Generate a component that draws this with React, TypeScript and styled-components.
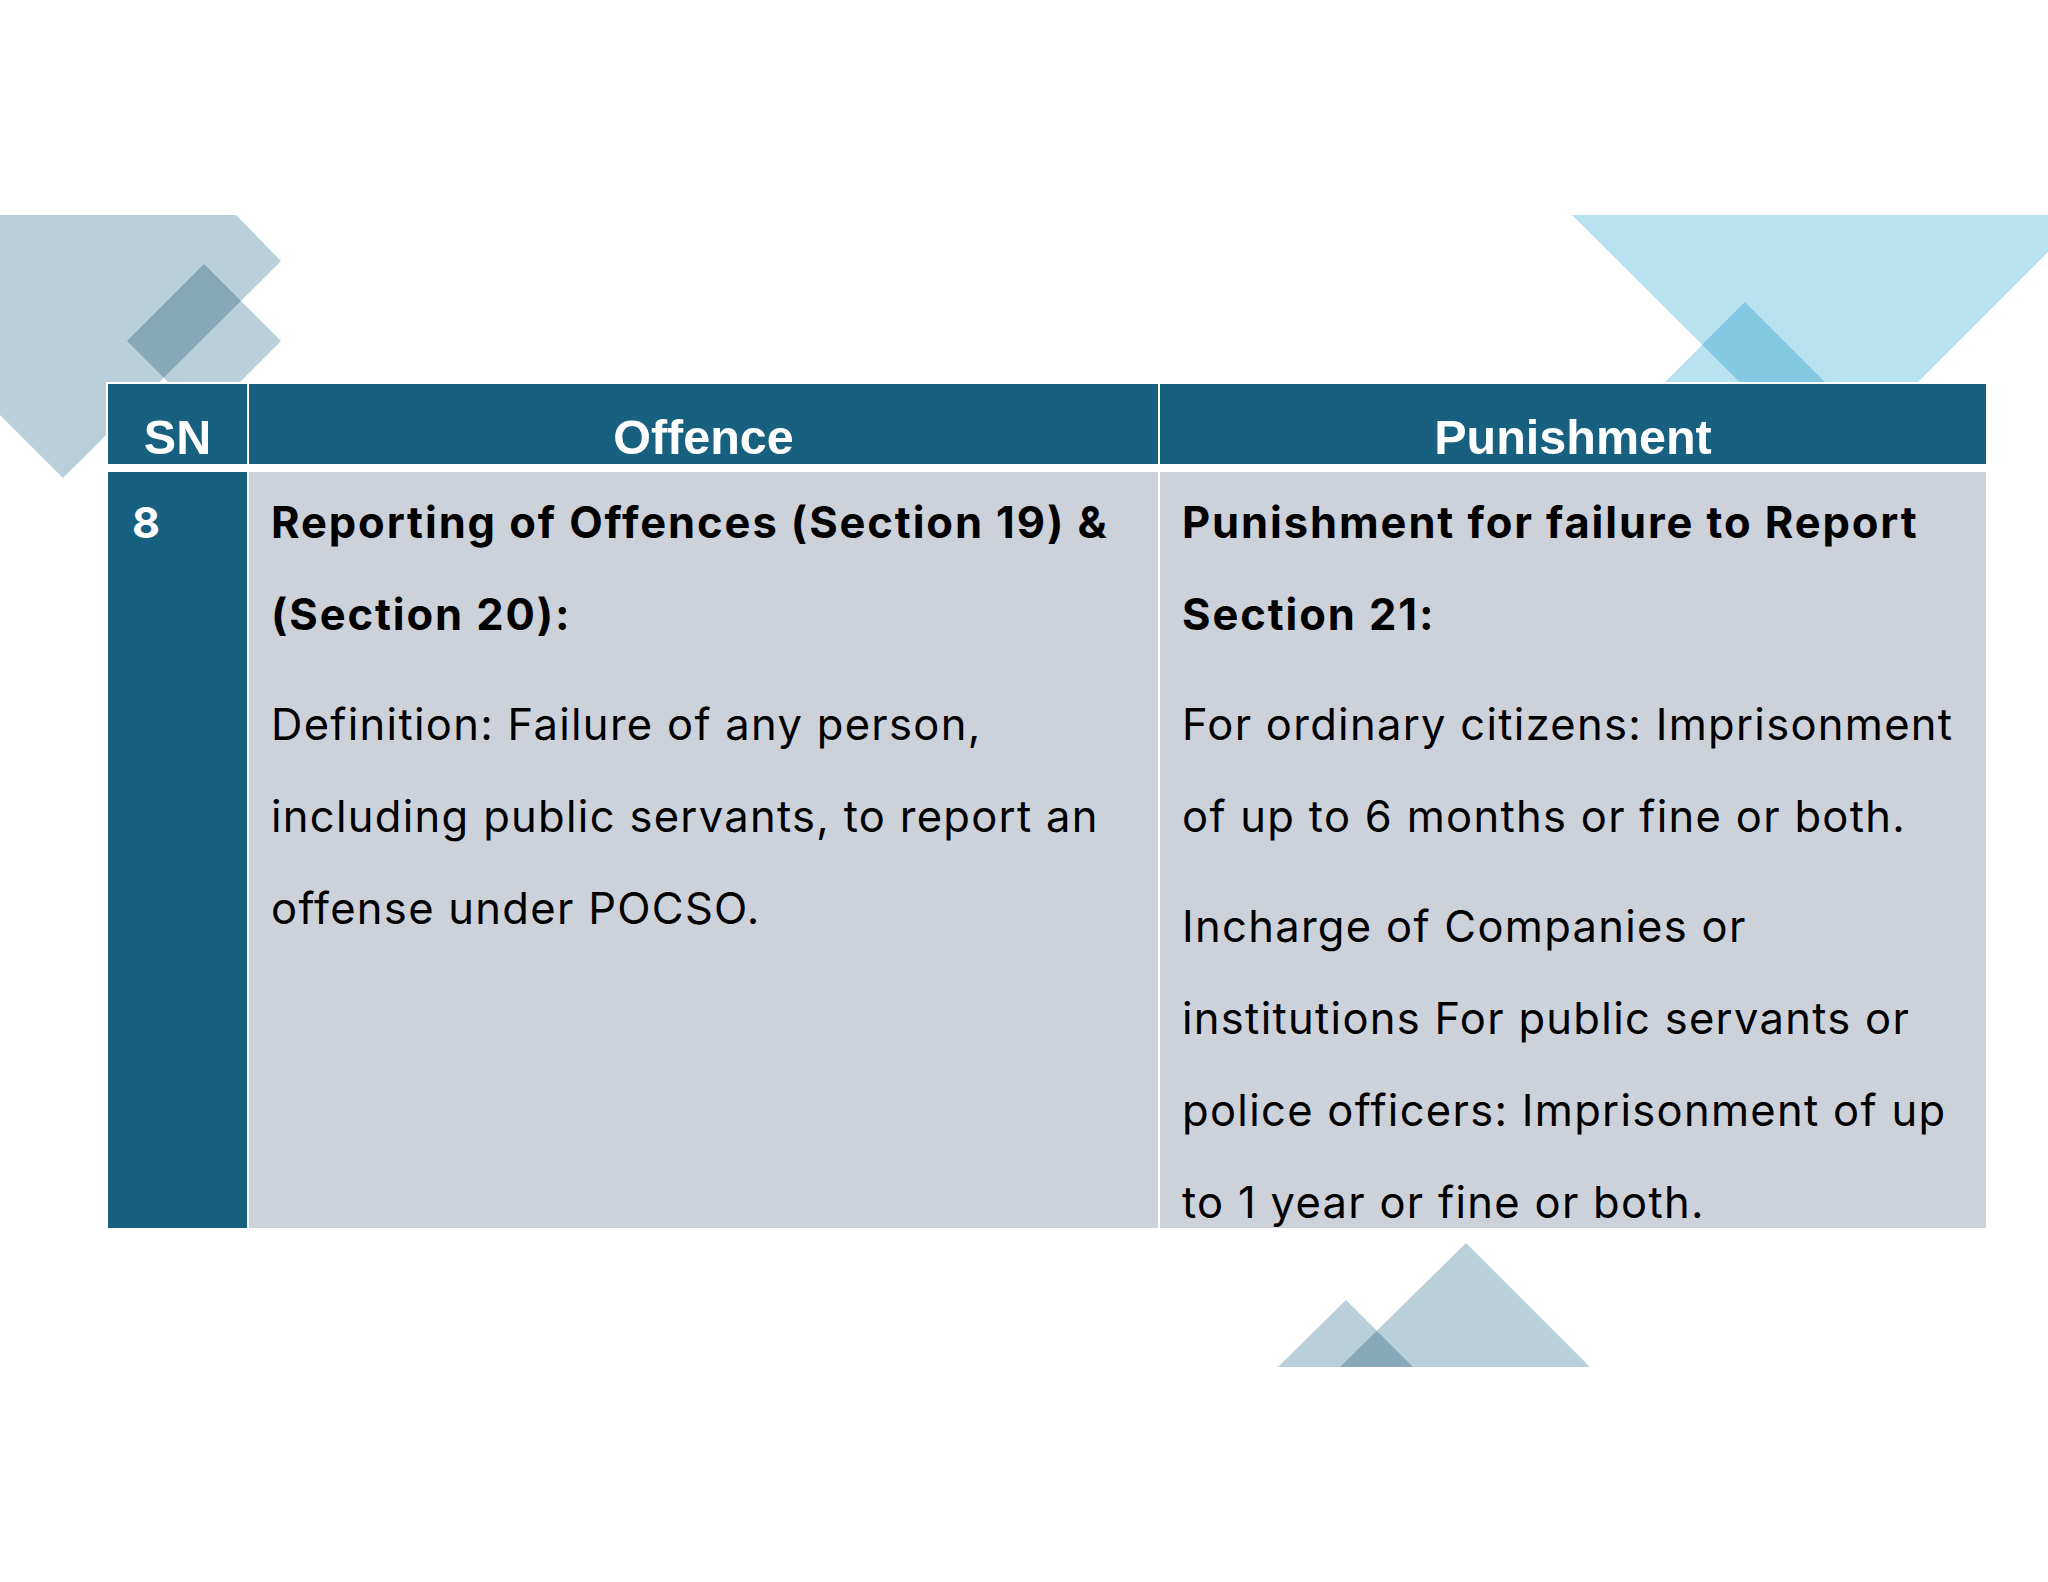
import React from 'react';
import styled, { createGlobalStyle } from 'styled-components';

const GlobalStyle = createGlobalStyle`
  html, body {
    margin: 0;
    padding: 0;
    background: #ffffff;
  }
  body {
    font-family: Inter, Roboto, "Liberation Sans", sans-serif;
  }
`;

const Slide = styled.div`
  position: relative;
  width: 2048px;
  height: 1582px;
  box-sizing: border-box;
  padding: 382px 0 0 106px;
  background: #ffffff;
  overflow: hidden;
`;

const Deco = styled.svg<{ $top: number; $left: number }>`
  position: absolute;
  top: ${(p) => p.$top}px;
  left: ${(p) => p.$left}px;
  overflow: hidden;
  polygon {
    mix-blend-mode: multiply;
  }
`;

const Table = styled.div`
  position: relative;
  z-index: 1;
  display: grid;
  grid-template-columns: 139px 909px 826px;
  grid-template-rows: 80px 756px;
  column-gap: 2px;
  row-gap: 8px;
  width: fit-content;
  padding: 2px;
  background: #ffffff;
`;

const HeadCell = styled.div`
  display: flex;
  align-items: flex-end;
  justify-content: center;
  padding-bottom: 3px;
  box-sizing: border-box;
  background: #186080;
  color: #ffffff;
  font-family: "Liberation Sans", Arial, sans-serif;
  font-weight: 700;
  font-size: 48.5px;
  line-height: 1;
`;

const SnCell = styled.div`
  background: #186080;
  color: #ffffff;
  padding: 4px 0 0 24px;
  font-weight: 700;
  font-size: 43px;
  line-height: 92px;
`;

const BodyCell = styled.div`
  background: #cdd2da;
  padding: 4px 0 0 22px;
  color: #000000;
  overflow: visible;
`;

const Para = styled.p<{ $bold?: boolean }>`
  margin: 0;
  font-size: 43.5px;
  line-height: 92px;
  white-space: nowrap;
  font-weight: ${(p) => (p.$bold ? 700 : 400)};
  letter-spacing: ${(p) => (p.$bold ? '1.9px' : '1.3px')};
  & + & {
    margin-top: 18px;
  }
`;

const App = () => {
  return (
    <Slide>
      <GlobalStyle />
      <Deco $top={215} $left={0} width={282} height={264}>
        <polygon points="0,0 236,0 281,46 63,263 0,200" fill="#b9cfd9" />
        <polygon points="204,49 281,126 204,203 127,126" fill="#b9cfd9" />
      </Deco>
      <Deco $top={215} $left={1572} width={476} height={205}>
        <polygon points="0,0 513,0 257,256" fill="#b8e2f0" />
        <polygon points="173,87 55,205 291,205" fill="#b8e2f0" />
      </Deco>
      <Deco $top={1243} $left={1278} width={312} height={124}>
        <polygon points="188,0 62,124 312,124" fill="#b9cfd9" />
        <polygon points="68,57 0,124 135,124" fill="#b9cfd9" />
      </Deco>

      <Table>
        <HeadCell>SN</HeadCell>
        <HeadCell>Offence</HeadCell>
        <HeadCell>Punishment</HeadCell>

        <SnCell>8</SnCell>
        <BodyCell>
          <Para $bold>
            Reporting of Offences (Section 19) &amp;
            <br />
            (Section 20):
          </Para>
          <Para>
            Definition: Failure of any person,
            <br />
            including public servants, to report an
            <br />
            offense under POCSO.
          </Para>
        </BodyCell>
        <BodyCell>
          <Para $bold>
            Punishment for failure to Report
            <br />
            Section 21:
          </Para>
          <Para>
            For ordinary citizens: Imprisonment
            <br />
            of up to 6 months or fine or both.
          </Para>
          <Para>
            Incharge of Companies or
            <br />
            institutions For public servants or
            <br />
            police officers: Imprisonment of up
            <br />
            to 1 year or fine or both.
          </Para>
        </BodyCell>
      </Table>
    </Slide>
  );
};

export default App;
